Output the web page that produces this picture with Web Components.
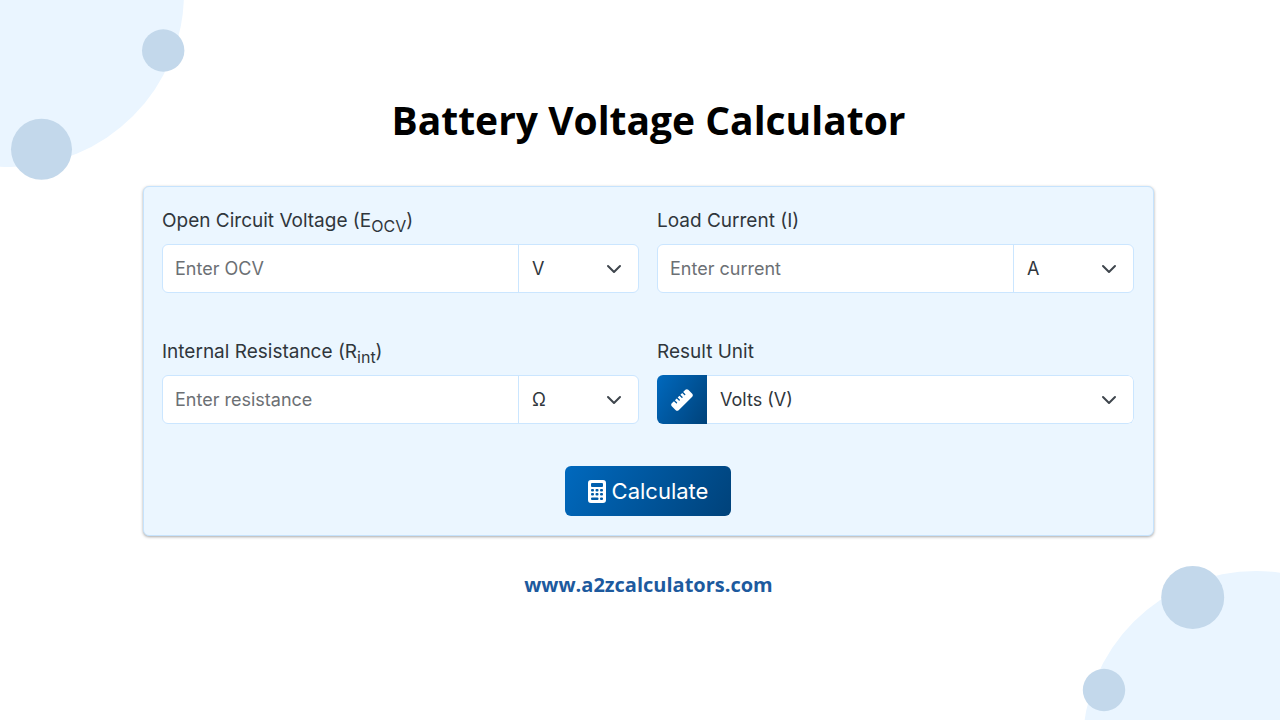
<!DOCTYPE html>
<html lang="en">
<head>
<meta charset="utf-8">
<meta name="viewport" content="width=device-width, initial-scale=1">
<title>Battery Voltage Calculator</title>
<style>
  body { margin: 0; background: #fff; font-family: Inter, "Liberation Sans", sans-serif; }
</style>
</head>
<body>
<calc-page>
  <span slot="title">Battery Voltage Calculator</span>
  <calc-card>
    <calc-field placeholder="Enter OCV" options="V,mV,kV">Open Circuit Voltage (E<sub>OCV</sub>)</calc-field>
    <calc-field placeholder="Enter current" options="A,mA">Load Current (I)</calc-field>
    <calc-field placeholder="Enter resistance" options="Ω,mΩ,kΩ">Internal Resistance (R<sub>int</sub>)</calc-field>
    <calc-unit options="Volts (V),Millivolts (mV),Kilovolts (kV)">Result Unit</calc-unit>
    <calc-button slot="action">Calculate</calc-button>
  </calc-card>
  <site-link slot="footer" href="https://www.a2zcalculators.com">www.a2zcalculators.com</site-link>
</calc-page>

<script>
const fieldStyle = `
  :host { display: block; min-width: 0; color: #30363c; }
  * { box-sizing: border-box; }
  label { display: block; height: 24px; line-height: 26px; font-size: 19px; margin-bottom: 12px; white-space: nowrap; }
  ::slotted(sub) { font-size: 16px; line-height: 1; }
  .group { display: flex; height: 49px; background: #fff; border: 1px solid #cbe6ff; border-radius: 6px; overflow: hidden; }
  input, select { font: inherit; font-size: 18px; color: #30363c; background: transparent; border: 0; outline: 0; margin: 0; height: 100%; width: 100%; min-width: 0; }
  input { flex: 1; padding: 0 12px; }
  input::placeholder { color: #6c7074; opacity: 1; }
  select { appearance: none; padding: 0 40px 0 13px; }
  .pick { position: relative; flex: none; width: 120px; border-left: 1px solid #cbe6ff; }
  .pick svg { position: absolute; right: 16px; top: 16px; width: 16px; height: 16px; pointer-events: none; }
`;
const chevron = `<svg viewBox="0 0 16 16" fill="none" stroke="#3f464d" stroke-width="2" stroke-linecap="round" stroke-linejoin="round" aria-hidden="true"><path d="m2 5 6 6 6-6"/></svg>`;
const optionList = host => host.getAttribute('options').split(',').map(o => `<option>${o}</option>`).join('');

class CalcField extends HTMLElement {
  constructor() {
    super();
    this.attachShadow({ mode: 'open' }).innerHTML = `<style>${fieldStyle}</style>
      <label for="value"><slot></slot></label>
      <div class="group">
        <input id="value" type="text" inputmode="decimal" placeholder="${this.getAttribute('placeholder')}">
        <div class="pick"><select aria-label="Unit">${optionList(this)}</select>${chevron}</div>
      </div>`;
  }
}

class CalcUnit extends HTMLElement {
  constructor() {
    super();
    this.attachShadow({ mode: 'open' }).innerHTML = `<style>${fieldStyle}
      .group { border: 0; }
      .badge { flex: none; width: 50px; display: grid; place-items: center; background: linear-gradient(120deg, #0069be, #00427a); }
      .pick { flex: 1; border: 1px solid #cbe6ff; border-left: 0; border-radius: 0 6px 6px 0; }
      .badge svg { width: 22px; height: 22px; }
    </style>
      <label for="unit"><slot></slot></label>
      <div class="group">
        <span class="badge"><svg viewBox="0 0 512 512" fill="#fff" aria-hidden="true"><path d="M178 494c-19 19-49 19-68 0L18 402c-19-19-19-49 0-68l51-51 48 48c6 6 16 6 22 0s6-16 0-22l-48-48 42-42 48 48c6 6 16 6 22 0s6-16 0-22l-48-48 42-42 48 48c6 6 16 6 22 0s6-16 0-22l-48-48 42-42 48 48c6 6 16 6 22 0s6-16 0-22l-48-48 51-51c19-19 49-19 68 0l92 92c19 19 19 49 0 68z"/></svg></span>
        <div class="pick"><select id="unit">${optionList(this)}</select>${chevron}</div>
      </div>`;
  }
}

class CalcButton extends HTMLElement {
  constructor() {
    super();
    this.attachShadow({ mode: 'open' }).innerHTML = `<style>
      :host { display: inline-block; }
      button { display: flex; align-items: center; gap: 6px; height: 50px; padding: 0 23px; border: 0; border-radius: 6px; color: #fff; font: inherit; font-size: 22px; background: linear-gradient(120deg, #0069be, #00427a); cursor: pointer; }
      svg { width: 18px; height: 23px; }
    </style>
    <button type="button"><svg viewBox="0 0 18 23" aria-hidden="true"><path fill="#fff" fill-rule="evenodd" d="M3 0h12a3 3 0 0 1 3 3v17a3 3 0 0 1-3 3H3a3 3 0 0 1-3-3V3a3 3 0 0 1 3-3zM4 3a1 1 0 0 0-1 1v2a1 1 0 0 0 1 1h10a1 1 0 0 0 1-1V4a1 1 0 0 0-1-1z"/><g fill="#005ba8"><rect x="3" y="9" width="3" height="2.5" rx="1"/><rect x="7.5" y="9" width="3" height="2.5" rx="1"/><rect x="12" y="9" width="3" height="2.5" rx="1"/><rect x="3" y="13" width="3" height="2.5" rx="1"/><rect x="7.5" y="13" width="3" height="2.5" rx="1"/><rect x="12" y="13" width="3" height="2.5" rx="1"/><rect x="3" y="17.5" width="7.5" height="2.5" rx="1"/><rect x="12" y="17.5" width="3" height="2.5" rx="1"/></g></svg><slot></slot></button>`;
  }
}

class CalcCard extends HTMLElement {
  constructor() {
    super();
    this.attachShadow({ mode: 'open' }).innerHTML = `<style>
      :host { display: block; box-sizing: border-box; padding: 21px 19px 19px 18px; border: 1px solid #c6e3fd; border-radius: 6px; background: #ebf6ff; box-shadow: 0 1px 3px rgba(0,0,0,.35); }
      .grid { display: grid; grid-template-columns: repeat(2, minmax(0, 1fr)); gap: 46px 18px; }
      .action { display: flex; justify-content: center; margin-top: 42px; }
    </style>
    <div class="grid"><slot></slot></div>
    <div class="action"><slot name="action"></slot></div>`;
  }
}

class SiteLink extends HTMLElement {
  constructor() {
    super();
    this.attachShadow({ mode: 'open' }).innerHTML = `<style>
      :host { display: block; text-align: center; }
      a { color: #1d5a9e; text-decoration: none; font: 700 20px/28px "Open Sans", sans-serif; }
    </style>
    <a href="${this.getAttribute('href')}"><slot></slot></a>`;
  }
}

class CalcPage extends HTMLElement {
  constructor() {
    super();
    this.attachShadow({ mode: 'open' }).innerHTML = `<style>
      :host { display: block; position: relative; min-height: 100vh; overflow: hidden; }
      .corner { position: absolute; width: 200px; height: 200px; }
      .top { left: 0; top: 0; }
      .bottom { right: 0; bottom: 0; }
      main { position: relative; padding: 92px 126px 0 143px; }
      h1 { margin: 0 0 38px; text-align: center; color: #000; font: 700 39px/56px "Open Sans", sans-serif; }
      footer { margin-top: 35px; }
    </style>
    <svg class="corner top" viewBox="0 0 200 200" aria-hidden="true"><circle cx="10" cy="-7" r="174" fill="#eaf5ff"/><g fill="#c3d8eb"><circle cx="163.2" cy="50.5" r="21.2"/><circle cx="41.5" cy="149.3" r="30.5"/></g></svg>
    <svg class="corner bottom" viewBox="1080 520 200 200" aria-hidden="true"><circle cx="1256" cy="744" r="173" fill="#eaf5ff"/><g fill="#c3d8eb"><circle cx="1192.7" cy="597.4" r="31.5"/><circle cx="1104" cy="690" r="21.2"/></g></svg>
    <main>
      <h1><slot name="title"></slot></h1>
      <slot></slot>
      <footer><slot name="footer"></slot></footer>
    </main>`;
  }
}

customElements.define('calc-field', CalcField);
customElements.define('calc-unit', CalcUnit);
customElements.define('calc-button', CalcButton);
customElements.define('calc-card', CalcCard);
customElements.define('site-link', SiteLink);
customElements.define('calc-page', CalcPage);
</script>
</body>
</html>
